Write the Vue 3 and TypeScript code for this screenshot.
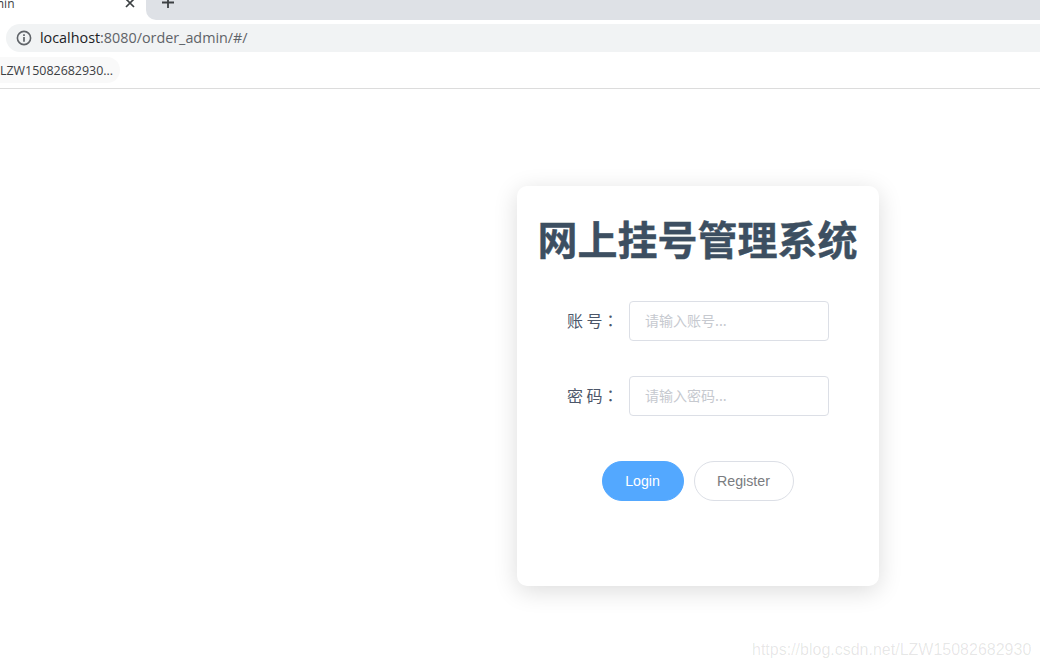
<script setup lang="ts">
interface Field { label: string; placeholder: string; type: string }
const fields: Field[] = [
  { label: '账 号：', placeholder: '请输入账号...', type: 'text' },
  { label: '密 码：', placeholder: '请输入密码...', type: 'password' },
]
</script>

<template>
  <div class="page">
    <header class="browser">
      <div class="tabstrip">
        <div class="tab">
          <span class="tab-title">admin</span>
          <svg class="tab-close" width="10" height="10" viewBox="0 0 10 10">
            <path d="M1 0 L9 8 M9 0 L1 8" stroke="#3c4043" stroke-width="1.7" fill="none" />
          </svg>
        </div>
        <div class="strip-rest">
          <svg class="tab-new" width="14" height="14" viewBox="0 0 14 14">
            <path d="M7 0 V11 M1 5.5 H13" stroke="#3c4043" stroke-width="1.8" fill="none" />
          </svg>
        </div>
      </div>
      <div class="addressrow">
        <div class="omnibox">
          <svg class="info" width="16" height="16" viewBox="0 0 16 16">
            <circle cx="8" cy="8" r="6.6" stroke="#5f6368" stroke-width="1.6" fill="none" />
            <path d="M8 7 V11.8 M8 4.2 V5.9" stroke="#5f6368" stroke-width="1.7" fill="none" />
          </svg>
          <span class="url"><span class="host">localhost</span>:8080/order_admin/#/</span>
        </div>
      </div>
      <div class="bookmarks">
        <div class="bookmark">LZW15082682930...</div>
      </div>
    </header>

    <main class="content">
      <section class="card">
        <h1 class="title">网上挂号管理系统</h1>
        <form class="form" @submit.prevent>
          <div v-for="field in fields" :key="field.label" class="row">
            <label class="label">{{ field.label }}</label>
            <input class="input" type="text" :placeholder="field.placeholder" />
          </div>
          <div class="actions">
            <button type="button" class="btn primary">Login</button>
            <button type="button" class="btn plain">Register</button>
          </div>
        </form>
      </section>
    </main>

    <div class="watermark">https://blog.csdn.net/LZW15082682930</div>
  </div>
</template>

<style>
html, body { margin: 0; background: #fff; overflow: hidden; }
</style>

<style scoped>
.page {
  position: relative;
  width: 1040px;
  height: 668px;
  overflow: hidden;
  background: #fff;
  font-family: "Liberation Sans", "Noto Sans CJK SC", sans-serif;
}
.browser {
  display: flex;
  flex-direction: column;
  height: 89px;
  box-sizing: border-box;
  border-bottom: 1px solid #dcdcdc;
  font-family: "Open Sans", "Noto Sans", sans-serif;
}
.tabstrip { display: flex; height: 20px; background: #fff; }
.tab {
  width: 146px;
  display: flex;
  justify-content: space-between;
  overflow: hidden;
  flex: none;
}
.tab-title {
  font-size: 12px;
  line-height: 12px;
  margin-left: -21px;
  margin-top: -2px;
  color: #3c4043;
}
.tab-close { margin: -1px 11px 0 0; }
.strip-rest {
  flex: 1;
  background: #dee1e6;
  border-bottom-left-radius: 10px;
  display: flex;
  padding-left: 15px;
}
.tab-new { margin-top: -3px; }
.addressrow { height: 32px; padding: 4px 0 0 6px; box-sizing: border-box; }
.omnibox {
  height: 28px;
  background: #f1f3f4;
  border-radius: 14px 0 0 14px;
  display: flex;
  align-items: center;
  padding-left: 10px;
}
.info { flex: none; }
.url {
  margin: -2px 0 0 8px;
  font-size: 14.35px;
  color: #5f6368;
  white-space: nowrap;
}
.host { color: #202124; }
.bookmarks { height: 36px; display: flex; align-items: flex-start; padding-top: 5px; box-sizing: border-box; }
.bookmark {
  width: 120px;
  height: 26px;
  line-height: 27px;
  box-sizing: border-box;
  font-size: 12.45px;
  color: #3c4043;
  background: #f9f9f9;
  border-radius: 0 13px 13px 0;
  white-space: nowrap;
}
.content { padding: 97px 0 0 517px; }
.card {
  width: 362px;
  height: 400px;
  box-sizing: border-box;
  background: #fff;
  border-radius: 10px;
  box-shadow: 0 5px 25px rgba(0, 0, 0, 0.14);
  padding-top: 28px;
}
.title {
  margin: 0;
  padding-right: 1px;
  font-size: 40px;
  line-height: 48px;
  font-weight: 700;
  text-align: center;
  color: #3d4f61;
  -webkit-text-stroke: 0.4px #3d4f61;
  font-family: "Noto Sans CJK SC", sans-serif;
}
.form { margin-top: 39px; }
.row {
  display: flex;
  align-items: center;
  height: 40px;
  margin-bottom: 35px;
  padding-left: 50px;
}
.label {
  width: 62px;
  margin-top: -2px;
  font-size: 16px;
  color: #4a5568;
  white-space: nowrap;
  font-family: "Noto Sans CJK TC", sans-serif;
  opacity: 0.99;
}
.input {
  width: 200px;
  height: 40px;
  box-sizing: border-box;
  border: 1px solid #dcdfe6;
  border-radius: 4px;
  padding: 0 15px 2px;
  font-size: 14px;
  outline: none;
  background: #fff;
  font-family: "Noto Sans CJK SC", sans-serif;
}
.input::placeholder { color: #c6c9cf; opacity: 1; }
.actions {
  display: flex;
  justify-content: center;
  gap: 10px;
  margin-top: 45px;
  padding-right: 1px;
}
.btn {
  height: 40px;
  box-sizing: border-box;
  border-radius: 20px;
  font-size: 14.2px;
  font-family: "Liberation Sans", sans-serif;
  padding: 0;
  cursor: pointer;
}
.primary { width: 82px; background: #53a8ff; border: 1px solid #53a8ff; color: #fff; }
.plain { width: 100px; background: #fff; border: 1px solid #dcdfe6; color: #7a7c80; }
.watermark {
  position: absolute;
  left: 752px;
  top: 640px;
  font-size: 16px;
  line-height: 20px;
  color: rgba(0, 0, 0, 0.1);
  white-space: nowrap;
}
</style>
